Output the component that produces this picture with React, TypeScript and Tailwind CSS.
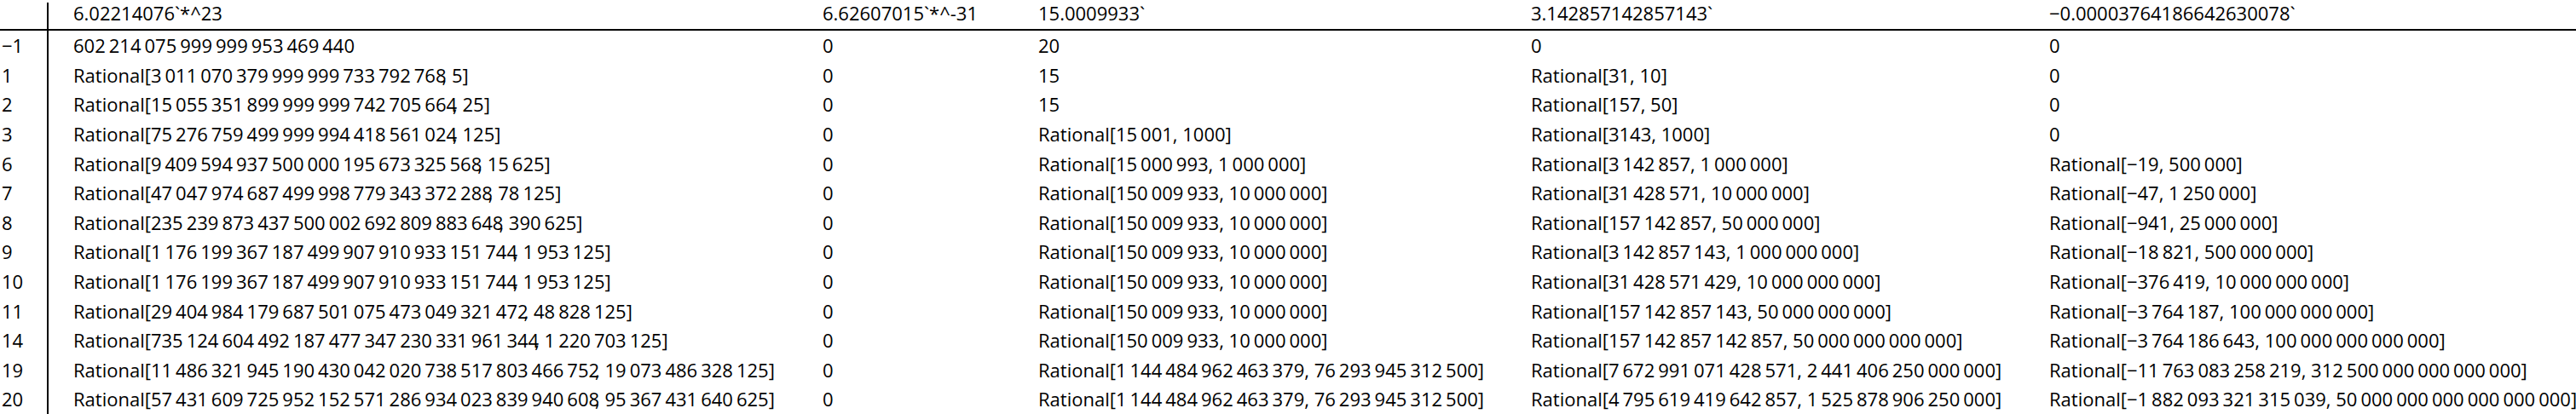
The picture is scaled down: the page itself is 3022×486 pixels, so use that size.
type Cell = string | [string, string];

const headers = [
  "6.02214076`*^23",
  "6.62607015`*^-31",
  "15.0009933`",
  "3.142857142857143`",
  "\u22120.00003764186642630078`",
];

const rows: { key: string; cells: Cell[] }[] = [
  { key: "\u22121", cells: ["602214075999999953469440", "0", "20", "0", "0"] },
  { key: "1", cells: [["3011070379999999733792768", "5"], "0", "15", ["31", "10"], "0"] },
  { key: "2", cells: [["15055351899999999742705664", "25"], "0", "15", ["157", "50"], "0"] },
  {
    key: "3",
    cells: [["75276759499999994418561024", "125"], "0", ["15001", "1000"], ["3143", "1000"], "0"],
  },
  {
    key: "6",
    cells: [
      ["9409594937500000195673325568", "15625"],
      "0",
      ["15000993", "1000000"],
      ["3142857", "1000000"],
      ["-19", "500000"],
    ],
  },
  {
    key: "7",
    cells: [
      ["47047974687499998779343372288", "78125"],
      "0",
      ["150009933", "10000000"],
      ["31428571", "10000000"],
      ["-47", "1250000"],
    ],
  },
  {
    key: "8",
    cells: [
      ["235239873437500002692809883648", "390625"],
      "0",
      ["150009933", "10000000"],
      ["157142857", "50000000"],
      ["-941", "25000000"],
    ],
  },
  {
    key: "9",
    cells: [
      ["1176199367187499907910933151744", "1953125"],
      "0",
      ["150009933", "10000000"],
      ["3142857143", "1000000000"],
      ["-18821", "500000000"],
    ],
  },
  {
    key: "10",
    cells: [
      ["1176199367187499907910933151744", "1953125"],
      "0",
      ["150009933", "10000000"],
      ["31428571429", "10000000000"],
      ["-376419", "10000000000"],
    ],
  },
  {
    key: "11",
    cells: [
      ["29404984179687501075473049321472", "48828125"],
      "0",
      ["150009933", "10000000"],
      ["157142857143", "50000000000"],
      ["-3764187", "100000000000"],
    ],
  },
  {
    key: "14",
    cells: [
      ["735124604492187477347230331961344", "1220703125"],
      "0",
      ["150009933", "10000000"],
      ["157142857142857", "50000000000000"],
      ["-3764186643", "100000000000000"],
    ],
  },
  {
    key: "19",
    cells: [
      ["11486321945190430042020738517803466752", "19073486328125"],
      "0",
      ["1144484962463379", "76293945312500"],
      ["7672991071428571", "2441406250000000"],
      ["-11763083258219", "312500000000000000"],
    ],
  },
  {
    key: "20",
    cells: [
      ["57431609725952152571286934023839940608", "95367431640625"],
      "0",
      ["1144484962463379", "76293945312500"],
      ["4795619419642857", "1525878906250000"],
      ["-1882093321315039", "50000000000000000000"],
    ],
  },
];

const grid = "grid grid-cols-[57px_908px_253px_578px_608px_1fr]";

function Num({ v }: { v: string }) {
  const neg = v.startsWith("-");
  const digits = neg ? v.slice(1) : v;
  const groups: string[] = [];
  if (digits.length > 4) {
    for (let end = digits.length; end > 0; end -= 3) {
      groups.unshift(digits.slice(Math.max(0, end - 3), end));
    }
  } else {
    groups.push(digits);
  }
  return (
    <span>
      {neg && "\u2212"}
      {groups.map((g, i) => (
        <span key={i} className={i > 0 ? "ml-[4px]" : ""}>
          {g}
        </span>
      ))}
    </span>
  );
}

function Value({ cell, tight }: { cell: Cell; tight?: boolean }) {
  if (typeof cell === "string") return <Num v={cell} />;
  return (
    <span>
      Rational[
      <Num v={cell[0]} />
      <span className={tight ? "-ml-[5px]" : ""}>,</span> <Num v={cell[1]} />]
    </span>
  );
}

export default function App() {
  return (
    <div className="h-[486px] w-[3022px] overflow-hidden bg-white font-['Open_Sans',sans-serif] text-[22px] leading-none text-black">
      <div className={`${grid} h-[36px] border-b-2 border-black`}>
        <div className="mt-[3px] border-r-2 border-black" />
        {headers.map((h, i) => (
          <div key={i} className={`flex items-center pb-[4px] whitespace-nowrap ${i === 0 ? "pl-[29px]" : ""}`}>
            {h}
          </div>
        ))}
      </div>
      {rows.map((row) => (
        <div key={row.key} className={`${grid} h-[34.6px]`}>
          <div className="flex items-center border-r-2 border-black pl-[2px]">{row.key}</div>
          {row.cells.map((c, i) => (
            <div key={i} className={`flex items-center whitespace-nowrap ${i === 0 ? "pl-[29px]" : ""}`}>
              <Value cell={c} tight={i === 0} />
            </div>
          ))}
        </div>
      ))}
    </div>
  );
}
